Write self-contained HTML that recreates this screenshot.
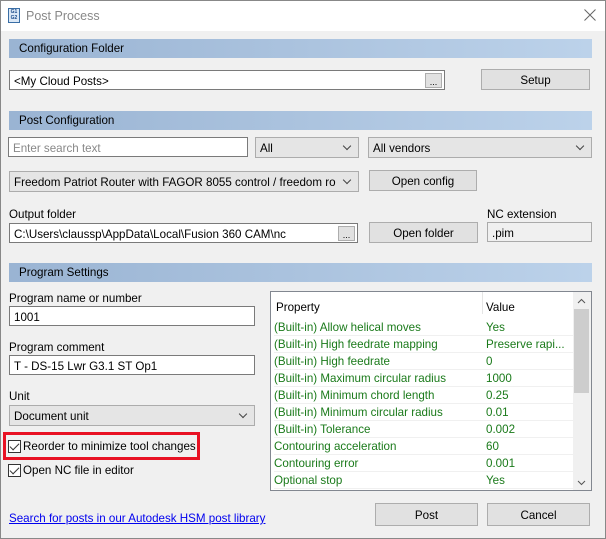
<!DOCTYPE html>
<html><head><style>
*{box-sizing:border-box;margin:0;padding:0}
body{width:606px;height:539px;background:#f0f0f0;font:11.6px "Liberation Sans",sans-serif;color:#000;position:relative;overflow:hidden}
.a{position:absolute;white-space:nowrap}
.hdr{position:absolute;left:9px;width:583px;height:19px;background:linear-gradient(90deg,#9ab4d3,#bcd2ea);padding:3px 0 0 10px}
.in{position:absolute;background:#fff;border:1px solid #7a7a7a;padding:4px 4px;height:20px;overflow:hidden;white-space:nowrap}
.btn{position:absolute;background:#e1e1e1;border:1px solid #adadad;text-align:center;padding-top:4px;height:21px}
.dd{position:absolute;background:#e5e5e5;border:1px solid #acacac;padding:4px 4px;height:21px;overflow:hidden;white-space:nowrap}
.dd:after{content:"";position:absolute;right:8px;top:5px;width:5px;height:5px;border-right:1px solid #444;border-bottom:1px solid #444;transform:rotate(45deg)}
.dots{position:absolute;right:2px;top:2px;width:17px;height:15px;background:#e1e1e1;border:1px solid #adadad;font-size:9px;text-align:center;line-height:16px}
.cb{position:absolute;width:13px;height:13px;border:1px solid #333;background:#fff}
.cb:after{content:"";position:absolute;left:3px;top:0px;width:4px;height:8px;border-right:1.5px solid #333;border-bottom:1.5px solid #333;transform:rotate(45deg)}
.tbl{position:absolute;left:270px;top:291px;width:322px;height:200px;border:1px solid #828790;background:#fff}
.r{position:absolute;left:3px;width:300px;height:17px;border-bottom:1px solid #f0f0f0;color:#1a7a1a;padding-top:2px}
.r span{position:absolute;left:208px;top:2px;padding-left:4px;height:17px}
</style></head><body>
<div class="a" style="left:0;top:0;width:606px;height:539px;border:1px solid #888"></div>
<div class="a" style="left:1px;top:1px;width:604px;height:30px;background:#fff"></div>
<div class="a" style="left:8px;top:8px;width:12px;height:15px;border:1px solid #3a6ea5;background:#dbe8f6;font-size:5px;line-height:6px;color:#1a4a8a;text-align:center;font-weight:bold">G1<br>G2</div>
<div class="a" style="left:26px;top:9px;color:#888;font-size:12.5px">Post Process</div>
<svg class="a" style="left:584px;top:9px" width="12" height="12"><path d="M0.5 0.5L11.5 11.5M11.5 0.5L0.5 11.5" stroke="#666" stroke-width="1"/></svg>

<div class="hdr" style="top:39px">Configuration Folder</div>
<div class="in" style="left:9px;top:70px;width:436px">&lt;My Cloud Posts&gt;<div class="dots">...</div></div>
<div class="btn" style="left:481px;top:69px;width:109px">Setup</div>

<div class="hdr" style="top:111px">Post Configuration</div>
<div class="in" style="left:8px;top:137px;width:240px;color:#888">Enter search text</div>
<div class="dd" style="left:255px;top:137px;width:104px">All</div>
<div class="dd" style="left:368px;top:137px;width:224px">All vendors</div>
<div class="dd" style="left:9px;top:171px;width:350px"><div style="width:322px;overflow:hidden">Freedom Patriot Router with FAGOR 8055 control / freedom router f</div></div>
<div class="btn" style="left:369px;top:170px;width:108px">Open config</div>

<div class="a" style="left:9px;top:208px">Output folder</div>
<div class="a" style="left:487px;top:208px">NC extension</div>
<div class="in" style="left:9px;top:223px;width:349px">C:\Users\claussp\AppData\Local\Fusion 360 CAM\nc<div class="dots">...</div></div>
<div class="btn" style="left:369px;top:222px;width:109px">Open folder</div>
<div class="in" style="left:487px;top:222px;width:105px;background:#f0f0f0;border-color:#aaa">.pim</div>

<div class="hdr" style="top:263px">Program Settings</div>
<div class="a" style="left:9px;top:292px">Program name or number</div>
<div class="in" style="left:9px;top:306px;width:246px">1001</div>
<div class="a" style="left:9px;top:341px">Program comment</div>
<div class="in" style="left:9px;top:355px;width:246px">T - DS-15 Lwr G3.1 ST Op1</div>
<div class="a" style="left:9px;top:390px">Unit</div>
<div class="dd" style="left:9px;top:405px;width:246px">Document unit</div>

<div class="a" style="left:3px;top:432px;width:197px;height:28px;border:3px solid #e81123"></div>
<div class="cb" style="left:8px;top:440px"></div>
<div class="a" style="left:23px;top:440px">Reorder to minimize tool changes</div>
<div class="cb" style="left:8px;top:464px"></div>
<div class="a" style="left:23px;top:464px">Open NC file in editor</div>
<div class="a" style="left:9px;top:512px;color:#0000ee;text-decoration:underline">Search for posts in our Autodesk HSM post library</div>

<div class="tbl">
<div class="a" style="left:5px;top:9px">Property</div>
<div class="a" style="left:211px;top:0;height:22px;border-left:1px solid #e5e5e5"></div>
<div class="a" style="left:215px;top:9px">Value</div>
<div class="r" style="top:27px">(Built-in) Allow helical moves<span>Yes</span></div>
<div class="r" style="top:44px">(Built-in) High feedrate mapping<span>Preserve rapi...</span></div>
<div class="r" style="top:61px">(Built-in) High feedrate<span>0</span></div>
<div class="r" style="top:78px">(Built-in) Maximum circular radius<span>1000</span></div>
<div class="r" style="top:95px">(Built-in) Minimum chord length<span>0.25</span></div>
<div class="r" style="top:112px">(Built-in) Minimum circular radius<span>0.01</span></div>
<div class="r" style="top:129px">(Built-in) Tolerance<span>0.002</span></div>
<div class="r" style="top:146px">Contouring acceleration<span>60</span></div>
<div class="r" style="top:163px">Contouring error<span>0.001</span></div>
<div class="r" style="top:180px">Optional stop<span>Yes</span></div>
<div class="a" style="left:302px;top:0;width:18px;height:198px;background:#f0f0f0"></div>
<div class="a" style="left:303px;top:17px;width:15px;height:84px;background:#cdcdcd"></div>
<svg class="a" style="left:306px;top:6px" width="9" height="6"><path d="M1 5L4.5 1.5L8 5" fill="none" stroke="#555"/></svg>
<svg class="a" style="left:306px;top:188px" width="9" height="6"><path d="M1 1L4.5 4.5L8 1" fill="none" stroke="#555"/></svg>
</div>

<div class="btn" style="left:375px;top:503px;width:103px;height:23px;padding-top:5px">Post</div>
<div class="btn" style="left:487px;top:503px;width:103px;height:23px;padding-top:5px">Cancel</div>
</body></html>
